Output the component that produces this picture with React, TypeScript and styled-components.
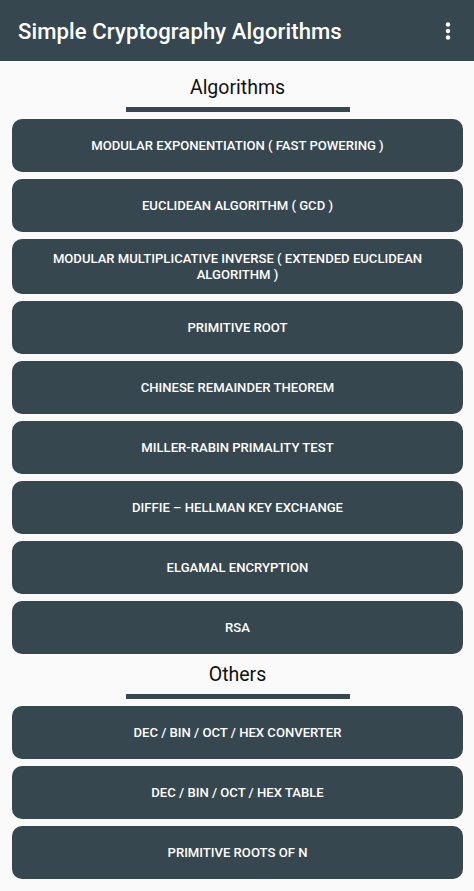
import React from "react";
import styled, { createGlobalStyle } from "styled-components";

const GlobalStyle = createGlobalStyle`
    html, body {
        margin: 0;
        padding: 0;
        background: #fafafa;
        font-family: Roboto, "Noto Sans", sans-serif;
    }
`

const Page = styled.div`
    width: 474px;
    min-height: 891px;
    background: #fafafa;
    display: flex;
    flex-direction: column;
`

const AppBar = styled.header`
    height: 61px;
    background: #37474f;
    display: flex;
    align-items: center;
    justify-content: space-between;
    padding: 0 14px 0 18px;
    box-sizing: border-box;
`

const Title = styled.h1`
    margin: 0;
    color: #ffffff;
    font-size: 22.1px;
    font-weight: 500;
    letter-spacing: 0.1px;
`

const MenuButton = styled.button`
    background: none;
    border: none;
    padding: 0;
    width: 24px;
    height: 24px;
    display: flex;
    align-items: center;
    justify-content: center;
    cursor: pointer;
`

const Content = styled.main`
    display: flex;
    flex-direction: column;
    padding: 0 11px 12px 12px;
`

const SectionHeading = styled.div<{ $top: number }>`
    display: flex;
    flex-direction: column;
    align-items: center;
    margin-top: ${({ $top }) => $top}px;
    margin-bottom: 7px;
`

const HeadingText = styled.h2`
    margin: 0;
    font-size: 19.5px;
    font-weight: 400;
    color: #111111;
    line-height: 24px;
`

const Underline = styled.div`
    width: 224px;
    height: 5px;
    margin-top: 7px;
    background: #37474f;
`

const ButtonList = styled.div`
    display: flex;
    flex-direction: column;
    gap: 7px;
`

const MenuItem = styled.button<{ $tall?: boolean }>`
    width: 451px;
    min-height: ${({ $tall }) => ($tall ? 55 : 53)}px;
    background: #37474f;
    border: none;
    border-radius: 10px;
    color: #ffffff;
    font-family: Roboto, "Noto Sans", sans-serif;
    font-size: 13.1px;
    font-weight: 500;
    text-transform: uppercase;
    line-height: 16px;
    padding: 4px 24px;
    text-align: center;
    cursor: pointer;
`

const algorithms = [
    "Modular Exponentiation ( Fast Powering )",
    "Euclidean Algorithm ( GCD )",
    "Modular Multiplicative Inverse ( Extended Euclidean Algorithm )",
    "Primitive Root",
    "Chinese Remainder Theorem",
    "Miller-Rabin Primality Test",
    "Diffie – Hellman Key Exchange",
    "ElGamal Encryption",
    "RSA",
]

const others = [
    "Dec / Bin / Oct / Hex Converter",
    "Dec / Bin / Oct / Hex Table",
    "Primitive Roots of N",
]

function KebabIcon() {
    return (
        <svg width="24" height="24" viewBox="0 0 24 24" fill="#ffffff">
            <circle cx="12" cy="5.5" r="2.2" />
            <circle cx="12" cy="12" r="2.2" />
            <circle cx="12" cy="18.5" r="2.2" />
        </svg>
    )
}

export default function App() {
    return (
        <React.Fragment>
            <GlobalStyle />
            <Page>
                <AppBar>
                    <Title>Simple Cryptography Algorithms</Title>
                    <MenuButton aria-label="More options"><KebabIcon /></MenuButton>
                </AppBar>
                <Content>
                    <SectionHeading $top={15}>
                        <HeadingText>Algorithms</HeadingText>
                        <Underline />
                    </SectionHeading>
                    <ButtonList>
                        {algorithms.map((name, i) => (
                            <MenuItem key={name} $tall={i === 2}>{name}</MenuItem>
                        ))}
                    </ButtonList>
                    <SectionHeading $top={9}>
                        <HeadingText>Others</HeadingText>
                        <Underline />
                    </SectionHeading>
                    <ButtonList>
                        {others.map(name => (
                            <MenuItem key={name}>{name}</MenuItem>
                        ))}
                    </ButtonList>
                </Content>
            </Page>
        </React.Fragment>
    )
}
